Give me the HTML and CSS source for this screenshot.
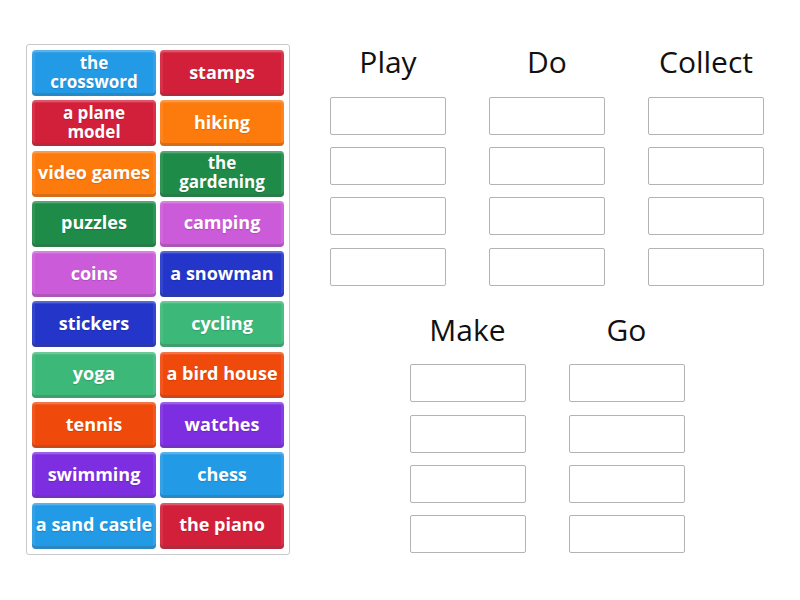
FILE: index.html
```html
<!DOCTYPE html>
<html>
<head>
    <meta charset="UTF-8">
    <title>Group sort</title>
    <link rel="stylesheet" href="styles.css">
</head>
<body>
<div class="activity">
    <!-- Cards waiting to be sorted -->
    <div class="card-tray">
        <div class="card blue two-line">the crossword</div>
        <div class="card red">stamps</div>
        <div class="card red two-line">a plane model</div>
        <div class="card orange">hiking</div>
        <div class="card orange">video games</div>
        <div class="card green two-line">the gardening</div>
        <div class="card green">puzzles</div>
        <div class="card pink">camping</div>
        <div class="card pink">coins</div>
        <div class="card navy">a snowman</div>
        <div class="card navy">stickers</div>
        <div class="card mint">cycling</div>
        <div class="card mint">yoga</div>
        <div class="card flame">a bird house</div>
        <div class="card flame">tennis</div>
        <div class="card purple">watches</div>
        <div class="card purple">swimming</div>
        <div class="card blue">chess</div>
        <div class="card blue">a sand castle</div>
        <div class="card red">the piano</div>
    </div>

    <!-- Groups to drop cards into -->
    <div class="groups">
        <div class="group-row">
            <div class="group">
                <h2 class="group-title">Play</h2>
                <div class="slot"></div>
                <div class="slot"></div>
                <div class="slot"></div>
                <div class="slot"></div>
            </div>
            <div class="group">
                <h2 class="group-title">Do</h2>
                <div class="slot"></div>
                <div class="slot"></div>
                <div class="slot"></div>
                <div class="slot"></div>
            </div>
            <div class="group">
                <h2 class="group-title">Collect</h2>
                <div class="slot"></div>
                <div class="slot"></div>
                <div class="slot"></div>
                <div class="slot"></div>
            </div>
        </div>
        <div class="group-row lower">
            <div class="group">
                <h2 class="group-title">Make</h2>
                <div class="slot"></div>
                <div class="slot"></div>
                <div class="slot"></div>
                <div class="slot"></div>
            </div>
            <div class="group">
                <h2 class="group-title">Go</h2>
                <div class="slot"></div>
                <div class="slot"></div>
                <div class="slot"></div>
                <div class="slot"></div>
            </div>
        </div>
    </div>
</div>
</body>
</html>
```

FILE: styles.css
```css
/* Page */
body {
    margin: 0;
    background-color: #fff;
    font-family: "Open Sans", "Liberation Sans", sans-serif;
}

.activity {
    display: flex;
    align-items: flex-start;
    padding: 44px 0 0 26px;
}

/* Card tray */
.card-tray {
    display: grid;
    grid-template-columns: 124px 124px;
    grid-auto-rows: 46px;
    column-gap: 4px;
    row-gap: 4.3px;
    padding: 5px;
    border: 1px solid #c9c9c9;
    border-radius: 3px;
}

.card {
    display: flex;
    align-items: center;
    justify-content: center;
    padding: 0 2px 3px;
    border-radius: 4px;
    color: #fff;
    font-size: 18px;
    font-weight: bold;
    line-height: 20px;
    text-align: center;
    white-space: nowrap;
    text-shadow: 0 1px 1px rgba(0, 0, 0, 0.15);
    box-shadow: inset 0 -3px 0 rgba(0, 0, 0, 0.16), inset 0 2px 0 rgba(255, 255, 255, 0.18), inset 0 0 0 3px rgba(255, 255, 255, 0.08);
}

.card.two-line {
    font-size: 17px;
    line-height: 19px;
    white-space: normal;
    padding: 0 18px 3px;
}

.blue { background-color: #239ae5; }
.red { background-color: #d3203a; }
.orange { background-color: #fd7a0d; }
.green { background-color: #1f8b48; }
.pink { background-color: #cb5bd8; }
.navy { background-color: #2336c9; }
.mint { background-color: #3cb878; }
.flame { background-color: #f0490c; }
.purple { background-color: #7c2ee0; }

/* Groups */
.groups {
    flex: 1;
    margin-left: 4px;
    display: flex;
    flex-direction: column;
    align-items: center;
    margin-top: -2px;
}

.group-row {
    display: flex;
    gap: 43px;
}

.group-row.lower {
    margin-top: 24px;
}

.group {
    width: 116px;
    display: flex;
    flex-direction: column;
    gap: 12.3px;
}

.group-title {
    margin: 0 -20px 2.5px;
    font-size: 30px;
    font-weight: normal;
    line-height: 40px;
    color: #111;
    text-align: center;
}

.slot {
    height: 38px;
    box-sizing: border-box;
    border: 1px solid #b3b3b3;
    border-radius: 2px;
    background-color: #fff;
}
```
